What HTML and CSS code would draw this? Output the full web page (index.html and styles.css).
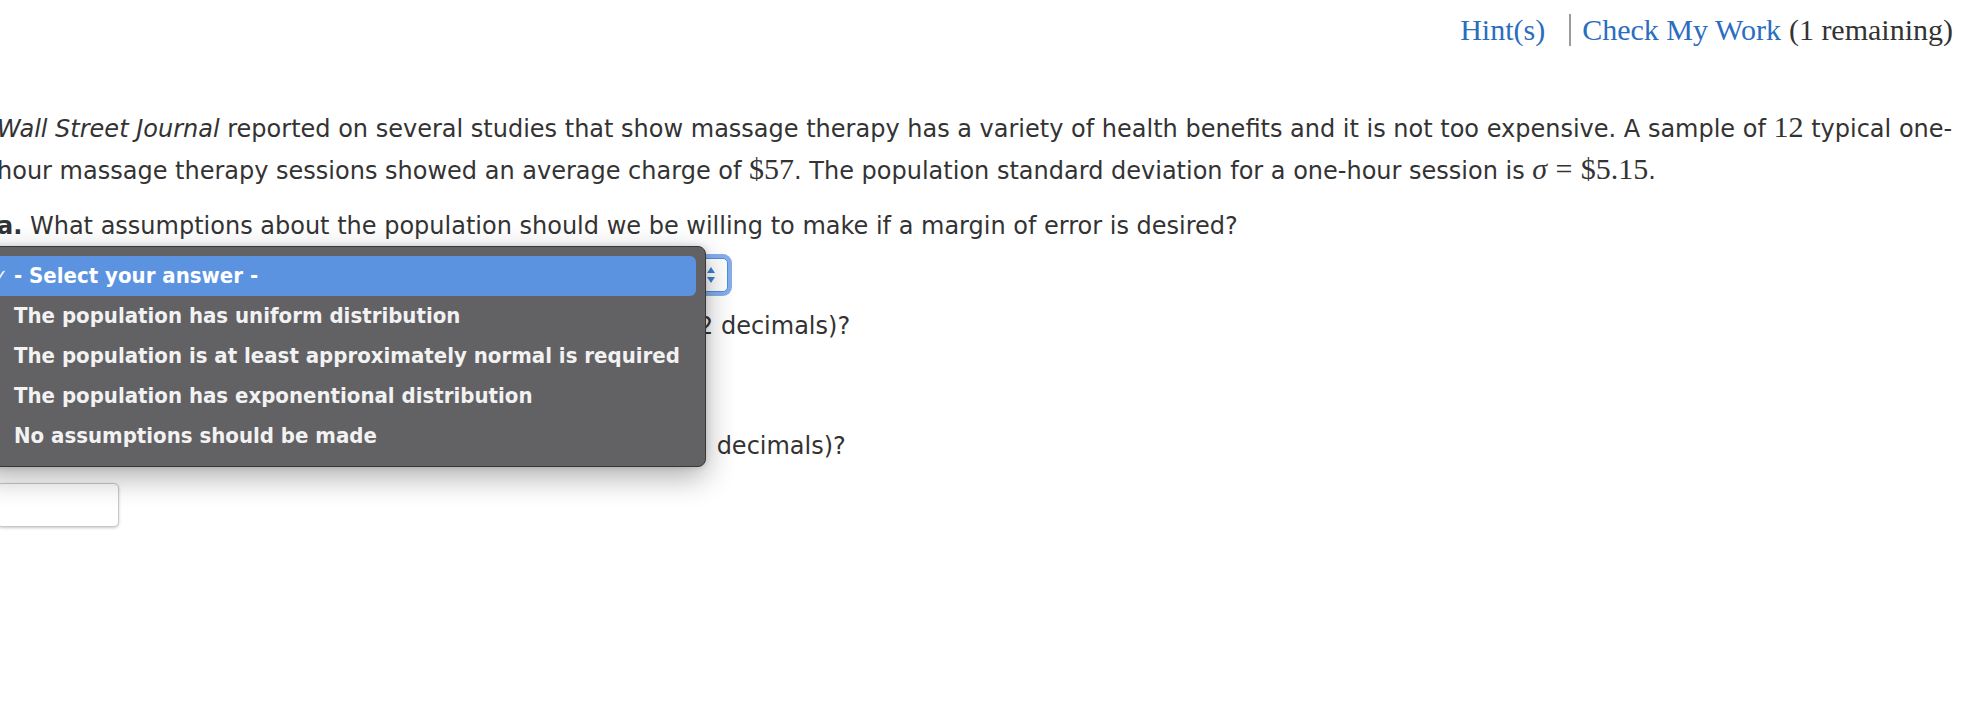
FILE: index.html
```html
<!DOCTYPE html>
<html lang="en">
<head>
<meta charset="utf-8">
<title>Massage therapy question</title>
<link rel="stylesheet" href="styles.css">
</head>
<body>
<header class="toolbar">
  <a class="link" href="#">Hint(s)</a>
  <span class="sep"></span>
  <a class="link" href="#">Check My Work</a>
  <span class="remaining">(1 remaining)</span>
</header>
<main class="content">
  <p class="intro"><i>Wall Street Journal</i> reported on several studies that show massage therapy has a variety of health benefits and it is not too expensive. A sample of <span class="math">12</span> typical one-hour massage therapy sessions showed an average charge of <span class="math">$57</span>. The population standard deviation for a one-hour session is <span class="math"><i>σ</i><span class="eq">=</span>$5.15</span>.</p>

  <section class="question">
    <p class="prompt"><b>a.</b> What assumptions about the population should we be willing to make if a margin of error is desired?</p>
    <div class="select-wrap">
      <div class="select">
        <svg class="arrows" width="10" height="18" viewBox="0 0 10 18" aria-hidden="true">
          <path d="M5 1 L9 7 L1 7 Z" fill="#3a82d2"/>
          <path d="M5 17 L9 11 L1 11 Z" fill="#3a82d2"/>
        </svg>
      </div>
      <ul class="popup">
        <li class="option active"><span class="check">✓</span>- Select your answer -</li>
        <li class="option">The population has uniform distribution</li>
        <li class="option">The population is at least approximately normal is required</li>
        <li class="option">The population has exponentional distribution</li>
        <li class="option">No assumptions should be made</li>
      </ul>
    </div>
  </section>

  <section class="question">
    <p class="qline"><span class="lead"><b>b.</b> Using a 95% confidence level, what is the margin of error (to </span>2 decimals)?</p>
    <div class="answer"></div>
  </section>

  <section class="question">
    <p class="qline qline-c"><span class="lead lead-c"><b>c.</b> What is the 95% confidence interval for the population mean (to 2</span> decimals)?</p>
    <div class="answer"></div>
  </section>
</main>
</body>
</html>
```

FILE: styles.css
```css
html, body {
  margin: 0;
  padding: 0;
  background: #ffffff;
}

body {
  color: #333333;
  font-family: "DejaVu Sans", Verdana, sans-serif;
  overflow: hidden;
  width: 1988px;
  height: 712px;
}

/* top toolbar */
.toolbar {
  height: 60px;
  display: flex;
  justify-content: flex-end;
  align-items: center;
  padding-right: 35px;
  font-family: "Liberation Serif", "DejaVu Serif", serif;
  font-size: 30px;
}

.link {
  color: #2b6dbe;
  text-decoration: none;
}

.sep {
  width: 2px;
  height: 32px;
  background: #9c9c9c;
  margin: 0 11px 0 24px;
}

.remaining {
  margin-left: 8px;
  color: #333333;
}

/* question content */
.content {
  margin-left: -3px;
  width: 1990px;
  font-size: 24px;
  line-height: 42px;
  position: relative;
}

.intro {
  margin: 48px 0 13px;
}

.math {
  font-family: "Liberation Serif", "DejaVu Serif", serif;
  font-size: 1.25em;
  line-height: 1;
}

.eq {
  margin: 0 0.28em;
}

.prompt {
  margin: 0;
}

.select-wrap {
  position: relative;
  margin-top: 11px;
  height: 34px;
}

.select {
  box-sizing: border-box;
  width: 731px;
  height: 34px;
  background: #ffffff;
  border: 1px solid #4a8fdf;
  border-radius: 5px;
  box-shadow: 0 0 0 4px rgba(104, 154, 232, 0.8);
  display: flex;
  justify-content: flex-end;
  align-items: center;
  padding-right: 11px;
}

.arrows {
  display: block;
}

/* native-style dropdown popup */
.popup {
  position: absolute;
  z-index: 10;
  top: -12px;
  left: -17px;
  box-sizing: border-box;
  width: 726px;
  margin: 0;
  padding: 9px 9px 10px 9px;
  list-style: none;
  background: #626164;
  border: 1px solid #38383a;
  border-radius: 8px;
  box-shadow: 0 10px 30px rgba(0, 0, 0, 0.32), 0 0 6px rgba(0, 0, 0, 0.15);
}

.option {
  position: relative;
  height: 40px;
  line-height: 40px;
  padding-left: 24px;
  font-family: "DejaVu Sans Condensed", "DejaVu Sans", sans-serif;
  font-weight: bold;
  font-size: 22px;
  color: #f2f2f2;
  white-space: nowrap;
}

.option.active {
  background: #5b93e1;
  border-radius: 6px;
  color: #ffffff;
}

.check {
  position: absolute;
  left: 4px;
  top: 0;
  font-size: 18px;
}

/* hidden questions behind the popup */
.qline {
  margin: 13px 0 0;
  white-space: nowrap;
}

.qline-c {
  margin-top: 18px;
}

.lead {
  display: inline-block;
  vertical-align: top;
  width: 701px;
  overflow: hidden;
  text-align: right;
}

.lead-c {
  width: 702px;
  margin-right: 10px;
}

.answer {
  box-sizing: border-box;
  width: 122px;
  height: 44px;
  margin-top: 16px;
  background: #ffffff;
  border: 1px solid #c9c9c9;
  border-radius: 5px;
  box-shadow: 0 1px 3px rgba(0, 0, 0, 0.22);
}
```
